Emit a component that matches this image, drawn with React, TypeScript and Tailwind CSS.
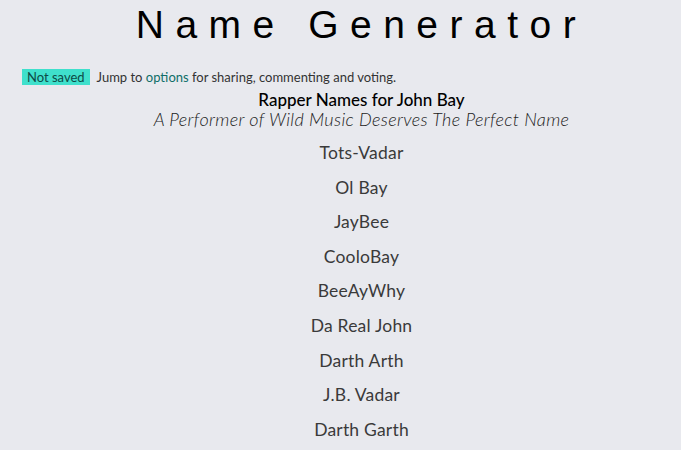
import React from "react";

const names = [
  "Tots-Vadar",
  "Ol Bay",
  "JayBee",
  "CooloBay",
  "BeeAyWhy",
  "Da Real John",
  "Darth Arth",
  "J.B. Vadar",
  "Darth Garth",
];

export default function App() {
  return (
    <div className="min-h-[450px] w-[681px] overflow-hidden bg-[#e8e9ee] font-['Lato','Open_Sans',sans-serif] text-[#333]">
      {/** Title */}
      <div className="pl-[42px] pt-[2px] text-center">
        <h1 className="font-['Liberation_Sans',sans-serif] text-[39px] leading-[46px] font-normal tracking-[11.5px] text-black">
          Name Generator
        </h1>
      </div>

      {/** Save status */}
      <div className="mt-[21px] flex items-center pl-[22px] text-[13px] leading-[16px]">
        <span className="bg-[#3fe0cc] px-[5px] text-[#0d4a46]">Not saved</span>
        <span className="ml-[7px]">
          Jump to <a className="text-[#0f6e68]">options</a> for sharing,
          commenting and voting.
        </span>
      </div>

      {/** Heading */}
      <div className="pl-[42px] text-center">
        <h2 className="mt-[5px] text-[17px] leading-[20px] font-medium text-black">
          Rapper Names for John Bay
        </h2>
        <p className="text-[18px] leading-[19px] font-light italic tracking-[0.35px] text-[#222]">
          A Performer of Wild Music Deserves The Perfect Name
        </p>
      </div>

      {/** Names */}
      <ul className="mt-[7px] pl-[42px] text-center">
        {names.map((n) => (
          <li key={n} className="text-[17.5px] leading-[34.6px] font-normal tracking-[0.2px] text-[#3a3a3a]">
            {n}
          </li>
        ))}
      </ul>
    </div>
  );
}
